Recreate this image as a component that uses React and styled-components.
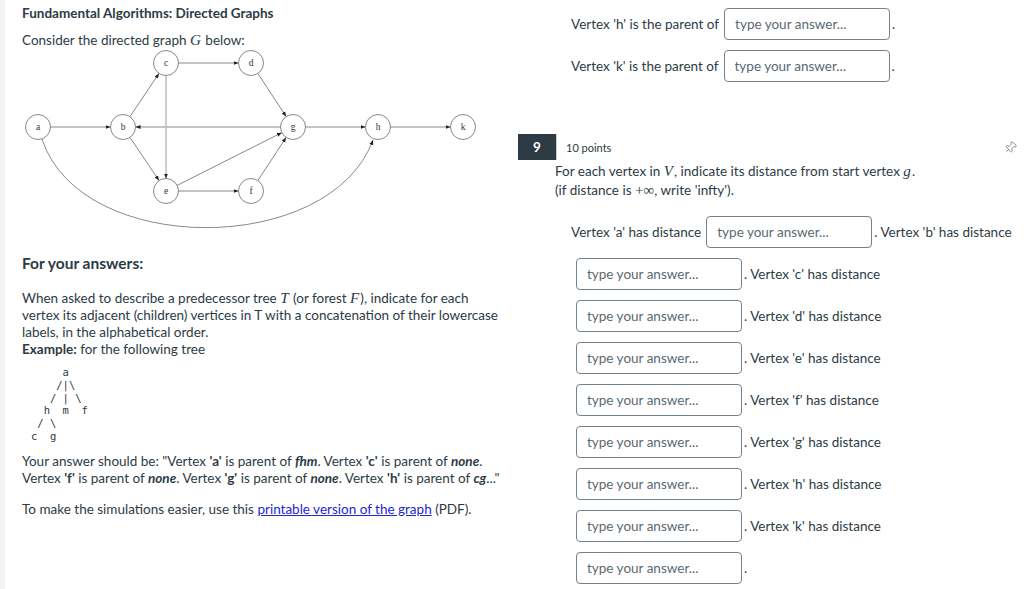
import React from 'react';
import styled, { createGlobalStyle } from 'styled-components';
import { Pin } from 'lucide-react';

const GlobalStyle = createGlobalStyle`
  html, body {
    margin: 0;
    padding: 0;
    background: #ffffff;
  }
  body {
    font-family: Lato, "Noto Sans", sans-serif;
    color: #2d3b45;
    font-size: 13.5px;
  }
`;

const Page = styled.div`
  display: grid;
  grid-template-columns: 510px 1fr;
  width: 1024px;
  height: 589px;
  overflow: hidden;
`;

const LeftPane = styled.section`
  border-left: 5px solid #f4f4f4;
  padding: 5px 8px 0 17px;
  line-height: 17px;
`;

const Title = styled.h2`
  margin: 0;
  font-size: 13.5px;
  font-weight: 700;
  line-height: 17px;
`;

const Para = styled.p`
  margin: ${({ $top }) => $top || 0}px 0 0;
  font-size: 13.5px;
  line-height: 17px;
`;

const SubHeading = styled.h3`
  margin: 22px 0 0;
  font-size: 15.5px;
  font-weight: 700;
  line-height: 20px;
`;

const MathVar = styled.span`
  font-family: "Liberation Serif", "DejaVu Serif", serif;
  font-style: italic;
  font-size: 1.12em;
  padding-right: 1px;
`;

const MathUpright = styled.span`
  font-family: "Liberation Serif", "DejaVu Serif", serif;
  font-size: 1.12em;
`;

const GraphBox = styled.div`
  height: 182px;
  margin-left: -22px;
`;

const Tree = styled.pre`
  margin: 8px 0 0 9px;
  font-family: "DejaVu Sans Mono", "Liberation Mono", monospace;
  font-size: 10.5px;
  line-height: 12.8px;
  color: #2d3b45;
`;

const Link = styled.a`
  color: #2424d8;
  text-decoration: underline;
`;

const RightPane = styled.section`
  padding: 3px 4px 0 8px;
`;

const FlowBlock = styled.div`
  padding-left: 53px;
  line-height: 17px;
`;

const FlowLine = styled.div`
  display: block;
`;

const Answer = styled.input`
  box-sizing: border-box;
  width: 166px;
  height: 32px;
  margin: 5px 2px 5px 5px;
  padding: 0 10px;
  border: 1px solid #75838e;
  border-radius: 4px;
  font-family: Lato, "Noto Sans", sans-serif;
  font-size: 13.5px;
  color: #2d3b45;
  vertical-align: baseline;
  background: #ffffff;
  &::placeholder {
    color: #5b6872;
  }
`;

const Nowrap = styled.span`
  white-space: nowrap;
`;

const QuestionHeader = styled.div`
  display: flex;
  align-items: center;
  margin-top: 47px;
`;

const Badge = styled.div`
  width: 38px;
  height: 26px;
  display: flex;
  align-items: center;
  justify-content: center;
  background: #2d3b45;
  color: #ffffff;
  font-weight: 700;
  font-size: 13.5px;
  border-right: 1px solid #c7cdd1;
`;

const Points = styled.span`
  margin-left: 9px;
  font-size: 11px;
  flex: 1;
`;

const PinIcon = styled(Pin)`
  transform: rotate(45deg);
  margin-right: 3px;
  color: #6b7780;
`;

const QuestionText = styled.div`
  padding-left: 37px;
  margin-top: 2px;
  line-height: 19px;
`;

const Distances = styled(FlowBlock)`
  margin-top: 11px;
`;

const nodes = {
  a: [38, 128],
  b: [123, 128],
  c: [166, 64],
  d: [251, 64],
  g: [293, 128],
  h: [378, 128],
  k: [463, 128],
  e: [166, 192],
  f: [251, 192],
};

const edges = [
  ['a', 'b'],
  ['b', 'c'],
  ['c', 'd'],
  ['d', 'g'],
  ['g', 'b'],
  ['b', 'e'],
  ['e', 'g'],
  ['e', 'f'],
  ['f', 'g'],
  ['g', 'h'],
  ['h', 'k'],
];

const R = 12.5;
const OFF_Y = 50;

function Edge({ from, to }) {
  const [x1, y1] = nodes[from];
  const [x2, y2] = nodes[to];
  const dx = x2 - x1;
  const dy = y2 - y1;
  const len = Math.sqrt(dx * dx + dy * dy);
  const ux = dx / len;
  const uy = dy / len;
  return (
    <line
      x1={x1 + ux * R}
      y1={y1 + uy * R - OFF_Y}
      x2={x2 - ux * R}
      y2={y2 - uy * R - OFF_Y}
      stroke="#555"
      strokeWidth="0.7"
      markerEnd="url(#arrow)"
    />
  );
}

const GraphSvg = () => (
  <svg width="500" height="182" viewBox="0 0 500 182">
    <defs>
      <marker id="arrow" markerWidth="6" markerHeight="6" refX="5" refY="3" orient="auto" markerUnits="userSpaceOnUse">
        <path d="M0,1 L5,3 L0,5 z" fill="#222" />
      </marker>
    </defs>
    {edges.map(([f, t]) => (
      <Edge key={f + t} from={f} to={t} />
    ))}
    <line x1="166" y1={64 + R - OFF_Y} x2="166" y2={192 - R - OFF_Y} stroke="#bdbdbd" strokeWidth="1.5" markerEnd="url(#arrow)" />
    <path
      d={`M 42 ${140 - OFF_Y} C 80 ${258 - OFF_Y}, 330 ${258 - OFF_Y}, 373 ${141 - OFF_Y}`}
      fill="none"
      stroke="#555"
      strokeWidth="0.7"
      markerEnd="url(#arrow)"
    />
    {Object.entries(nodes).map(([name, [x, y]]) => (
      <g key={name}>
        <circle cx={x} cy={y - OFF_Y} r={R} fill="#fff" stroke="#555" strokeWidth="0.7" />
        <text
          x={x}
          y={y - OFF_Y + 3}
          textAnchor="middle"
          fontFamily="'Liberation Serif', serif"
          fontSize="9.5"
          fill="#333"
        >
          {name}
        </text>
      </g>
    ))}
  </svg>
);

const treeText = `     a
    /|\\
   / | \\
  h  m  f
 / \\
c  g`;

const letters = ['b', 'c', 'd', 'e', 'f', 'g', 'h', 'k'];

export default function App() {
  return (
    <>
      <GlobalStyle />
      <Page>
        <LeftPane>
          <Title>Fundamental Algorithms: Directed Graphs</Title>
          <Para $top={10}>
            Consider the directed graph <MathVar>G</MathVar> below:
          </Para>
          <GraphBox>
            <GraphSvg />
          </GraphBox>
          <SubHeading>For your answers:</SubHeading>
          <Para $top={17}>
            When asked to describe a predecessor tree <MathVar>T</MathVar> (or forest <MathVar>F</MathVar>), indicate for each
            vertex its adjacent (children) vertices in T with a concatenation of their lowercase labels, in the
            alphabetical order.
            <br />
            <b>Example:</b> for the following tree
          </Para>
          <Tree>{treeText}</Tree>
          <Para $top={10}>
            Your answer should be: "Vertex <b>'a'</b> is parent of <b><i>fhm</i></b>. Vertex <b>'c'</b> is parent of{' '}
            <b><i>none</i></b>.
            <br />
            Vertex <b>'f'</b> is parent of <b><i>none</i></b>. Vertex <b>'g'</b> is parent of <b><i>none</i></b>. Vertex{' '}
            <b>'h'</b> is parent of <b><i>cg</i></b>..."
          </Para>
          <Para $top={14}>
            To make the simulations easier, use this <Link href="#">printable version of the graph</Link> (PDF).
          </Para>
        </LeftPane>

        <RightPane>
          <FlowBlock>
            <FlowLine>
              Vertex 'h' is the parent of<Answer placeholder="type your answer..." />.
            </FlowLine>
            <FlowLine>
              Vertex 'k' is the parent of<Answer placeholder="type your answer..." />.
            </FlowLine>
          </FlowBlock>

          <QuestionHeader>
            <Badge>9</Badge>
            <Points>10 points</Points>
            <PinIcon size={13} strokeWidth={1.5} />
          </QuestionHeader>
          <QuestionText>
            For each vertex in <MathVar>V</MathVar>, indicate its distance from start vertex <MathVar>g</MathVar>.
            <br />
            (if distance is <MathUpright>+∞</MathUpright>, write 'infty').
          </QuestionText>

          <Distances>
            Vertex 'a' has distance<Answer placeholder="type your answer..." />
            {letters.map((l) => (
              <React.Fragment key={l}>
                <Nowrap>. Vertex '{l}' has distance</Nowrap>
                <wbr />
                <Answer placeholder="type your answer..." />
              </React.Fragment>
            ))}
            .
          </Distances>
        </RightPane>
      </Page>
    </>
  );
}
